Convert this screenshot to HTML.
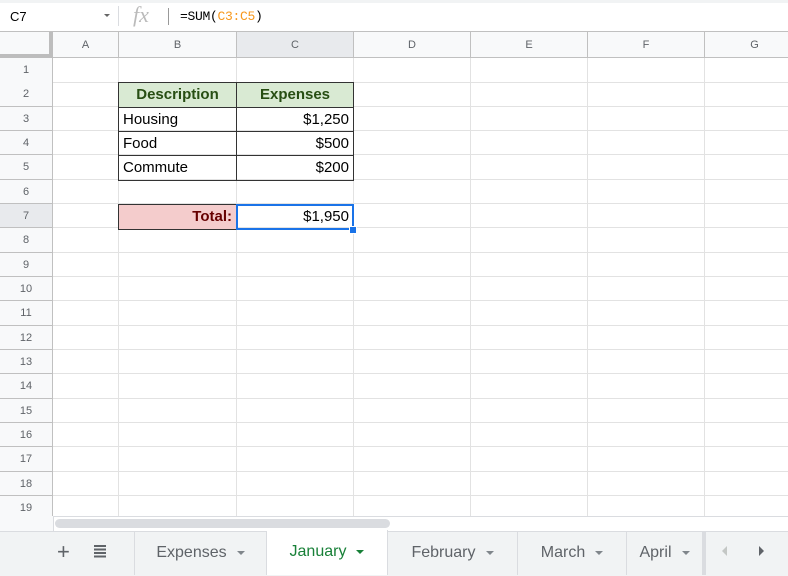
<!DOCTYPE html><html><head><style>
body{margin:0;width:788px;height:575px;overflow:hidden;background:#fff;font-family:"Liberation Sans",Arial,sans-serif;position:relative}
.a{position:absolute}
.ch{position:absolute;top:32px;height:26px;border-right:1px solid #c0c0c0;border-bottom:1px solid #c0c0c0;background:#f8f9fa;color:#5f6368;font-size:11px;text-align:center;line-height:26px;box-sizing:border-box}
.rh{position:absolute;left:0;width:53px;background:#f8f9fa;border-right:1px solid #c0c0c0;border-bottom:1px solid #c0c0c0;box-sizing:border-box;color:#5f6368;font-size:11px;text-align:center}
.gl{position:absolute;left:53px;right:0;height:1px;background:#e2e2e2}
.vl{position:absolute;top:58px;height:458px;width:1px;background:#e2e2e2}
.c{position:absolute;box-sizing:border-box;font-size:15px;color:#000;padding:0 4px;line-height:23px}
.tab{position:absolute;top:531px;height:44px;line-height:44px;font-size:16px;color:#5f6368;text-align:center;border-right:1px solid #dadce0;box-sizing:border-box}
.tri{display:inline-block;width:0;height:0;border-left:4px solid transparent;border-right:4px solid transparent;border-top:4px solid #80868b;vertical-align:middle;margin-left:10px}
</style></head><body>
<div class="a" style="left:0;top:0;width:788px;height:3px;background:#f1f3f4"></div>
<div class="a" style="left:10px;top:9px;font-size:13px;color:#000">C7</div>
<div class="a" style="left:104px;top:14px;border-left:3px solid transparent;border-right:3px solid transparent;border-top:3px solid #666"></div>
<div class="a" style="left:118px;top:6px;width:1px;height:20px;background:#dadce0"></div>
<div class="a" style="left:133px;top:2px;font-family:'Liberation Serif',serif;font-style:italic;font-size:22px;color:#bbb">fx</div>
<div class="a" style="left:168px;top:8px;width:1px;height:17px;background:#999"></div>
<div class="a" style="left:180px;top:9px;font-family:'Liberation Mono',monospace;font-size:13px;color:#000;letter-spacing:-0.3px">=SUM(<span style="color:#f7981d">C3:C5</span>)</div>
<div class="a" style="left:0;top:31px;width:788px;height:1px;background:#c0c0c0"></div>
<div class="ch" style="left:0;width:53px;border-right:4px solid #bdbdbd;border-bottom:4px solid #bdbdbd"></div>
<div class="ch" style="left:53px;width:66px">A</div>
<div class="ch" style="left:119px;width:118px">B</div>
<div class="ch" style="left:237px;width:117px;background:#e8eaed">C</div>
<div class="ch" style="left:354px;width:117px">D</div>
<div class="ch" style="left:471px;width:117px">E</div>
<div class="ch" style="left:588px;width:117px">F</div>
<div class="ch" style="left:705px;width:100px">G</div>
<div id="rows"></div>
<script>
var h='';for(var i=1;i<=19;i++){var t=58+(i-1)*24.33;h+='<div class="rh" style="top:'+t+'px;height:24.5px;line-height:24px;'+(i==7?'background:#e8eaed;':'')+'">'+i+'</div><div class="gl" style="top:'+(t+23.5)+'px"></div>';}
[118,236,353,470,587,704].forEach(function(x){h+='<div class="vl" style="left:'+x+'px"></div>'});
document.getElementById('rows').innerHTML=h;
</script>
<div class="c" style="left:118px;top:82px;width:119px;height:26px;background:#d9ead3;border:1px solid #333;color:#274e13;font-weight:bold;text-align:center">Description</div>
<div class="c" style="left:236px;top:82px;width:118px;height:26px;background:#d9ead3;border:1px solid #333;color:#274e13;font-weight:bold;text-align:center">Expenses</div>
<div class="c" style="left:118px;top:107px;width:119px;height:25px;border:1px solid #333">Housing</div>
<div class="c" style="left:236px;top:107px;width:118px;height:25px;border:1px solid #333;text-align:right">$1,250</div>
<div class="c" style="left:118px;top:131px;width:119px;height:25px;border:1px solid #333">Food</div>
<div class="c" style="left:236px;top:131px;width:118px;height:25px;border:1px solid #333;text-align:right">$500</div>
<div class="c" style="left:118px;top:155px;width:119px;height:26px;border:1px solid #333">Commute</div>
<div class="c" style="left:236px;top:155px;width:118px;height:26px;border:1px solid #333;text-align:right">$200</div>
<div class="c" style="left:118px;top:204px;width:119px;height:26px;border:1px solid #333;background:#f4cccc;color:#660000;font-weight:bold;text-align:right">Total:</div>
<div class="c" style="left:236px;top:204px;width:118px;height:26px;border:2px solid #1a73e8;text-align:right;line-height:21px;padding-right:3px">$1,950</div>
<div class="a" style="left:349px;top:226px;width:6px;height:6px;background:#1a73e8;border:1px solid #fff"></div>
<div class="a" style="left:0;top:516px;width:788px;height:15px;background:#fff;border-top:1px solid #dadce0"></div>
<div class="a" style="left:0;top:516px;width:53px;height:15px;background:#f8f9fa;border-right:1px solid #dadce0"></div>
<div class="a" style="left:55px;top:519px;width:335px;height:9px;border-radius:5px;background:#dadce0"></div>
<div class="a" style="left:0;top:531px;width:788px;height:44px;background:#f1f3f4;border-top:1px solid #dadce0"></div>
<div class="a" style="left:57px;top:539px;font-size:22px;color:#5f6368">+</div>
<div class="a" style="left:94px;top:545px;width:12px;height:13px;background:repeating-linear-gradient(#5f6368 0 2px,transparent 2px 3.5px)"></div>
<div class="a" style="left:134px;top:531px;width:1px;height:44px;background:#dadce0"></div>
<div class="tab" style="left:135px;width:132px">Expenses<span class="tri"></span></div>
<div class="tab" style="left:267px;width:121px;background:#fff;color:#188038;top:530px;height:45px">January<span class="tri" style="border-top-color:#188038"></span></div>
<div class="tab" style="left:388px;width:130px">February<span class="tri"></span></div>
<div class="tab" style="left:518px;width:109px">March<span class="tri"></span></div>
<div class="tab" style="left:627px;width:76px">April<span class="tri"></span></div>
<div class="a" style="left:703px;top:531px;width:3px;height:44px;background:#dadce0"></div>
<div class="a" style="left:722px;top:546px;border-top:5px solid transparent;border-bottom:5px solid transparent;border-right:5px solid #c4c7c5"></div>
<div class="a" style="left:759px;top:546px;border-top:5px solid transparent;border-bottom:5px solid transparent;border-left:5px solid #5f6368"></div>
</body></html>
